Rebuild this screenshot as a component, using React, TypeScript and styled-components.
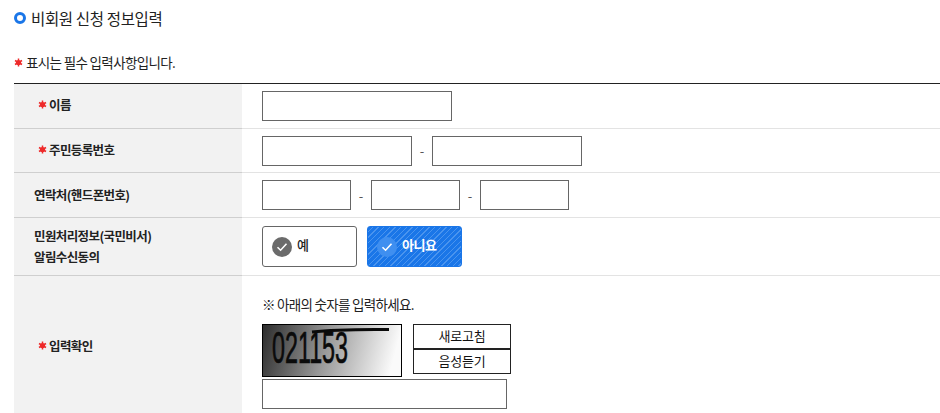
import styled, { createGlobalStyle } from 'styled-components';

const GlobalStyle = createGlobalStyle`
  html, body {
    margin: 0;
    padding: 0;
    background: #fff;
    overflow: hidden;
  }

  body {
    font-family: "Noto Sans CJK KR", "Noto Sans", sans-serif;
    color: #222;
  }
`;

const Page = styled.div`
  width: 940px;
  height: 413px;
  padding-left: 14px;
  box-sizing: border-box;
  overflow: hidden;
`;

const Title = styled.h2`
  display: flex;
  align-items: center;
  gap: 5px;
  height: 36px;
  margin: 0;
  font-size: 15.5px;
  font-weight: 400;
  letter-spacing: -0.35px;
  color: #222;
`;

const TitleDot = styled.span`
  width: 12px;
  height: 12px;
  box-sizing: border-box;
  border: 3px solid #1a76e8;
  border-radius: 50%;
`;

const Notice = styled.p`
  display: flex;
  align-items: center;
  gap: 3px;
  height: 47px;
  margin: 0;
  padding-top: 5px;
  box-sizing: border-box;
  font-size: 13.5px;
  letter-spacing: -0.65px;
  color: #222;
`;

const Form = styled.div`
  border-top: 1px solid #222;
`;

const Row = styled.div<{ $height: number; $last?: boolean }>`
  display: grid;
  grid-template-columns: 228px 1fr;
  height: ${(p) => p.$height}px;
  box-sizing: border-box;
  border-bottom: ${(p) => (p.$last ? 'none' : '1px solid #e3e3e3')};
`;

const Label = styled.div<{ $required?: boolean; $last?: boolean }>`
  display: flex;
  align-items: center;
  gap: 2px;
  margin-bottom: ${(p) => (p.$last ? '0' : '-1px')};
  padding-left: ${(p) => (p.$required ? '24px' : '20px')};
  padding-bottom: ${(p) => (p.$last ? '0' : p.$required ? '3px' : '1px')};
  background: #f2f2f2;
  border-bottom: ${(p) => (p.$last ? 'none' : '1px solid #cfcfcf')};
  font-size: 12.5px;
  font-weight: 700;
  line-height: 21px;
  letter-spacing: -0.6px;
  color: #222;
`;

const LabelLines = styled.span`
  display: block;
`;

const Field = styled.div`
  display: flex;
  align-items: center;
  padding-left: 20px;
`;

const TextInput = styled.input<{ $width: number }>`
  display: block;
  width: ${(p) => p.$width}px;
  height: 30px;
  box-sizing: border-box;
  margin: 0;
  padding: 0 6px;
  border: 1px solid #666;
  border-radius: 0;
  background: #fff;
`;

const Dash = styled.span`
  width: 20px;
  text-align: center;
  font-size: 13px;
  color: #555;
`;

const ChoiceGroup = styled.div`
  display: flex;
  gap: 10px;
`;

const Choice = styled.div<{ $active?: boolean }>`
  display: flex;
  align-items: center;
  gap: 5px;
  width: 95px;
  height: 41px;
  box-sizing: border-box;
  padding: 0 0 4px 9px;
  border: 1px solid ${(p) => (p.$active ? '#1a76e8' : '#666')};
  border-radius: 3px;
  font-size: 13px;
  font-weight: ${(p) => (p.$active ? 700 : 500)};
  letter-spacing: -0.4px;
  color: ${(p) => (p.$active ? '#fff' : '#222')};
  background: ${(p) =>
    p.$active
      ? 'repeating-linear-gradient(135deg, #1a76e8 0, #1a76e8 3px, #4a94ee 3px, #4a94ee 4px)'
      : '#fff'};
`;

const CheckMark = styled.span<{ $active?: boolean }>`
  display: flex;
  align-items: center;
  justify-content: center;
  width: 20px;
  height: 20px;
  margin-top: 4px;
  border-radius: 50%;
  background: ${(p) => (p.$active ? '#3f8ff0' : '#6b6b6b')};
`;

const CaptchaField = styled.div`
  display: flex;
  flex-direction: column;
  padding: 19px 0 0 20px;
`;

const CaptchaHint = styled.p`
  margin: 0 0 11px;
  height: 18px;
  font-size: 13.5px;
  line-height: 18px;
  letter-spacing: -0.7px;
  color: #222;
`;

const CaptchaRow = styled.div`
  display: flex;
  gap: 11px;
  margin-bottom: 2px;
`;

const CaptchaImage = styled.svg`
  display: block;
  width: 140px;
  height: 53px;
`;

const CaptchaButtons = styled.div`
  display: flex;
  flex-direction: column;
`;

const CaptchaButton = styled.div`
  width: 98px;
  height: 25px;
  box-sizing: border-box;
  border: 1px solid #222;
  text-align: center;
  font-size: 13px;
  line-height: 22px;
  letter-spacing: -0.2px;
  color: #111;
`;

function RequiredMark() {
  return (
    <svg width="9" height="9" viewBox="0 0 9 9" aria-hidden="true">
      <circle cx="4.5" cy="4.5" r="2.6" fill="#ee2b2b" />
      <g stroke="#ee2b2b" strokeWidth="1.5">
        <path d="M4.5 0.5v8" />
        <path d="M1 2.5l7 4" />
        <path d="M8 2.5L1 6.5" />
      </g>
    </svg>
  );
}

function Check() {
  return (
    <svg width="12" height="10" viewBox="0 0 12 10" aria-hidden="true">
      <path d="M1.5 5.2L4.6 8.2L10.5 1.8" fill="none" stroke="#fff" strokeWidth="1.6" />
    </svg>
  );
}

function Captcha() {
  return (
    <CaptchaImage viewBox="0 0 140 53" role="img" aria-label="자동입력 방지 숫자">
      <defs>
        <linearGradient id="captchaBg" x1="0" y1="0" x2="1" y2="0.1">
          <stop offset="0" stopColor="#2c2c2c" />
          <stop offset="0.5" stopColor="#9a9a9a" />
          <stop offset="1" stopColor="#fafafa" />
        </linearGradient>
      </defs>
      <rect x="0.5" y="0.5" width="139" height="52" fill="url(#captchaBg)" stroke="#000" />
      <path d="M50 8Q75 5 127 5.5" fill="none" stroke="#0a0a0a" strokeWidth="3" />
      <text
        transform="translate(10 39) scale(1 2)"
        fontFamily="Liberation Sans, sans-serif"
        fontSize="22"
        textLength="76"
        lengthAdjust="spacingAndGlyphs"
        fill="#0b0b0b"
        stroke="#0b0b0b"
        strokeWidth="0.35"
      >
        021153
      </text>
    </CaptchaImage>
  );
}

export default function App() {
  return (
    <Page>
      <GlobalStyle />
      <Title>
        <TitleDot />
        비회원 신청 정보입력
      </Title>
      <Notice>
        <RequiredMark />
        표시는 필수 입력사항입니다.
      </Notice>
      <Form>
        <Row $height={45}>
          <Label $required>
            <RequiredMark />
            이름
          </Label>
          <Field>
            <TextInput $width={190} />
          </Field>
        </Row>
        <Row $height={44}>
          <Label $required>
            <RequiredMark />
            주민등록번호
          </Label>
          <Field>
            <TextInput $width={150} />
            <Dash>-</Dash>
            <TextInput $width={150} />
          </Field>
        </Row>
        <Row $height={45}>
          <Label>연락처(핸드폰번호)</Label>
          <Field>
            <TextInput $width={89} />
            <Dash>-</Dash>
            <TextInput $width={89} />
            <Dash>-</Dash>
            <TextInput $width={89} />
          </Field>
        </Row>
        <Row $height={58}>
          <Label>
            <LabelLines>
              민원처리정보(국민비서)
              <br />
              알림수신동의
            </LabelLines>
          </Label>
          <Field>
            <ChoiceGroup>
              <Choice>
                <CheckMark>
                  <Check />
                </CheckMark>
                예
              </Choice>
              <Choice $active>
                <CheckMark $active>
                  <Check />
                </CheckMark>
                아니요
              </Choice>
            </ChoiceGroup>
          </Field>
        </Row>
        <Row $height={138} $last>
          <Label $required $last>
            <RequiredMark />
            입력확인
          </Label>
          <CaptchaField>
            <CaptchaHint>※ 아래의 숫자를 입력하세요.</CaptchaHint>
            <CaptchaRow>
              <Captcha />
              <CaptchaButtons>
                <CaptchaButton>새로고침</CaptchaButton>
                <CaptchaButton>음성듣기</CaptchaButton>
              </CaptchaButtons>
            </CaptchaRow>
            <TextInput $width={245} />
          </CaptchaField>
        </Row>
      </Form>
    </Page>
  );
}
